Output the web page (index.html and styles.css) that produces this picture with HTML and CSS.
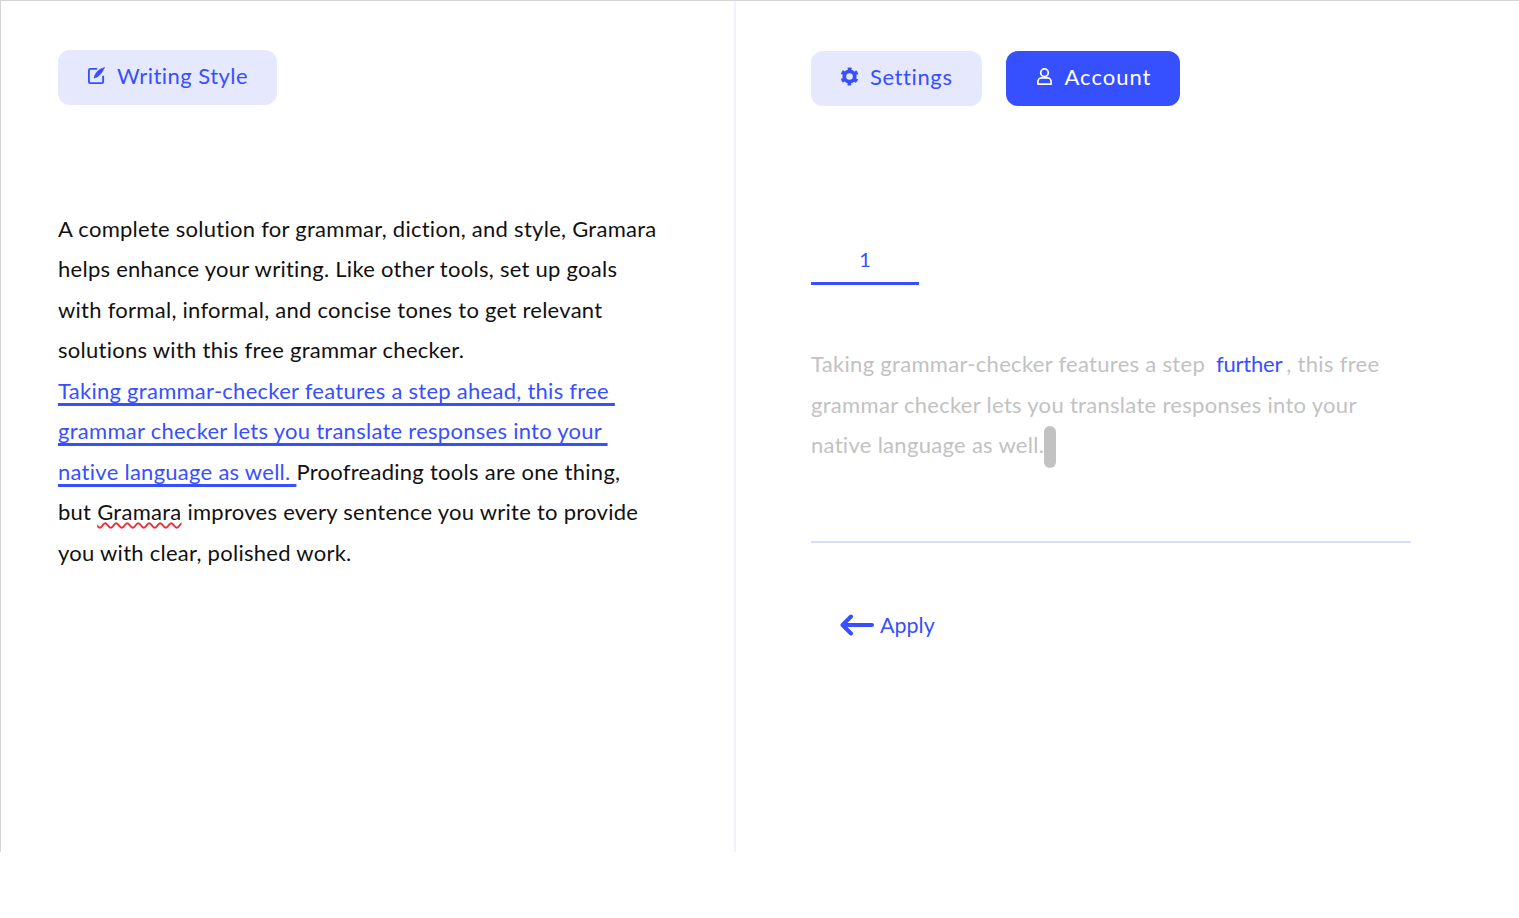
FILE: index.html
```html
<!DOCTYPE html>
<html lang="en">
<head>
    <meta charset="UTF-8">
    <meta name="viewport" content="width=device-width, initial-scale=1.0">
    <title>Gramara</title>
    <link rel="stylesheet" href="styles.css">
</head>
<body>
    <div class="app">
        <div class="pane-left">
            <div class="toolbar">
                <button class="btn btn-light btn-style">
                    <svg class="icon" viewBox="0 0 20 20" fill="none" stroke="currentColor" stroke-width="2" stroke-linecap="round" stroke-linejoin="round">
                        <path d="M10 3H3.500A1.500 1.500 0 0 0 2 4.500V16.500A1.500 1.500 0 0 0 3.500 18H15.500A1.500 1.500 0 0 0 17 16.500V11"/>
                        <path d="M18 2C13 3 9 6.500 7.500 12.500C11.500 12 15.500 8 18 2Z" fill="currentColor" stroke-width="1"/>
                    </svg>
                    Writing Style
                </button>
            </div>
            <p class="text">
                A complete solution for grammar, diction, and style, Gramara<br>
                helps enhance your writing. Like other tools, set up goals<br>
                with formal, informal, and concise tones to get relevant<br>
                solutions with this free grammar checker.<br>
                <span class="marked">Taking grammar-checker features a step ahead, this free&nbsp;</span><br>
                <span class="marked">grammar checker lets you translate responses into your&nbsp;</span><br>
                <span class="marked">native language as well.&nbsp;</span>Proofreading tools are one thing,<br>
                but <span class="typo">Gramara</span> improves every sentence you write to provide<br>
                you with clear, polished work.
            </p>
        </div>
        <div class="pane-right">
            <div class="toolbar">
                <button class="btn btn-light">
                    <svg class="icon" viewBox="0 0 20 20" fill="none" stroke="currentColor">
                        <circle cx="10" cy="10" r="5.500" stroke-width="4"/>
                        <circle cx="10" cy="10" r="8" stroke-width="3" stroke-dasharray="4 4.380" stroke-dashoffset="2" transform="rotate(90 10 10)"/>
                    </svg>
                    Settings
                </button>
                <button class="btn btn-primary">
                    <svg class="icon" viewBox="0 0 20 20" fill="none" stroke="currentColor" stroke-width="1.800" stroke-linecap="round" stroke-linejoin="round">
                        <circle cx="10" cy="6" r="4"/>
                        <path d="M6.500 11.500H13.500C15.500 11.500 17 13.500 17 16V18H3V16C3 13.500 4.500 11.500 6.500 11.500Z"/>
                    </svg>
                    Account
                </button>
            </div>
            <div class="tabs">
                <div class="tab">1</div>
            </div>
            <p class="suggestion">
                Taking grammar-checker features a step <span class="word">further</span>, this free<br>
                grammar checker lets you translate responses into your<br>
                native language as well.<span class="caret"></span>
            </p>
            <div class="divider"></div>
            <div class="apply">
                <svg class="arrow" viewBox="0 0 34 22" fill="none" stroke="currentColor" stroke-width="4" stroke-linecap="round" stroke-linejoin="round">
                    <path d="M32 11H3M11 2.500L2.500 11L11 19.500"/>
                </svg>
                Apply
            </div>
        </div>
    </div>
</body>
</html>
```

FILE: styles.css
```css
body {
    font-family: 'Lato', 'Liberation Sans', sans-serif;
    font-variant-ligatures: none;
    background-color: #fff;
    margin: 0;
    padding: 0;
}

.app {
    display: flex;
    height: 851px;
    border-top: 1px solid #d4d4d4;
    border-left: 1px solid #d4d4d4;
}

.pane-left {
    width: 735px;
    flex-shrink: 0;
    border-right: 2px solid #f2f2ff;
    padding: 49px 0 0 57px;
    box-sizing: border-box;
}

.pane-right {
    flex: 1;
    padding: 50px 0 0 75px;
}

.toolbar {
    display: flex;
    gap: 24px;
}

.btn {
    display: flex;
    align-items: center;
    gap: 11px;
    height: 55px;
    padding: 0 29px 4px;
    border: none;
    border-radius: 12px;
    font-family: inherit;
    font-size: 22px;
    letter-spacing: 0.6px;
    cursor: pointer;
}

.btn-light {
    background-color: #e6e9fe;
    color: #384fff;
}

.btn-style {
    letter-spacing: 0.45px;
}

.btn-primary {
    background-color: #364fff;
    color: #fff;
    letter-spacing: 1px;
}

.icon {
    width: 19px;
    height: 19px;
}

.text {
    margin: 103.500px 0 0;
    font-size: 22px;
    line-height: 40.500px;
    letter-spacing: 0.27px;
    color: #111;
    white-space: nowrap;
}

.marked {
    color: #384fff;
    text-decoration: underline solid #384fff 3px;
    text-decoration-skip-ink: none;
    text-underline-offset: 4px;
}

.typo {
    text-decoration: underline wavy #e8303a 1.500px;
    text-decoration-skip-ink: none;
    text-underline-offset: 2px;
}

.tabs {
    display: flex;
    margin-top: 137px;
}

.tab {
    width: 108px;
    height: 42px;
    line-height: 32px;
    border-bottom: 3px solid #384fff;
    box-sizing: border-box;
    text-align: center;
    font-size: 20px;
    color: #384fff;
}

.suggestion {
    margin: 59px 0 0;
    font-size: 22px;
    line-height: 40.500px;
    letter-spacing: 0.3px;
    color: #c2c2c2;
    white-space: nowrap;
}

.word {
    color: #384fff;
    margin: 0 4px 0 5px;
    letter-spacing: -0.2px;
}

.caret {
    display: inline-block;
    width: 12px;
    height: 42px;
    border-radius: 6px;
    background-color: #c2c2c2;
    vertical-align: middle;
}

.divider {
    width: 600px;
    height: 2px;
    margin-top: 73px;
    background-color: #d9deff;
}

.apply {
    display: flex;
    align-items: center;
    gap: 6px;
    margin: 69px 0 0 29px;
    font-size: 21.500px;
    color: #384fff;
}

.arrow {
    width: 34px;
    height: 22px;
}
```
